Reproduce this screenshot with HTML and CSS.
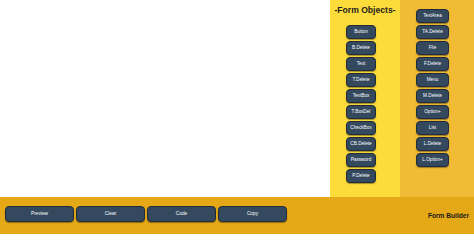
FILE: index.html
```html
<!DOCTYPE html>
<html>
<head>
<meta charset="utf-8">
<link rel="stylesheet" href="styles.css">
</head>
<body>
<div class="page">
  <div class="main">
    <div class="canvas"></div>
    <div class="col col-a">
      <div class="title">-Form Objects-</div>
      <div class="btn-list">
        <button class="obj">Button</button>
        <button class="obj">B.Delete</button>
        <button class="obj">Text</button>
        <button class="obj">T.Delete</button>
        <button class="obj">TextBox</button>
        <button class="obj">T.BoxDel</button>
        <button class="obj">CheckBox</button>
        <button class="obj">CB.Delete</button>
        <button class="obj">Password</button>
        <button class="obj">P.Delete</button>
      </div>
    </div>
    <div class="col col-b">
      <div class="btn-list">
        <button class="obj">TextArea</button>
        <button class="obj">TA.Delete</button>
        <button class="obj">File</button>
        <button class="obj">F.Delete</button>
        <button class="obj">Menu</button>
        <button class="obj">M.Delete</button>
        <button class="obj">Option+</button>
        <button class="obj">List</button>
        <button class="obj">L.Delete</button>
        <button class="obj">L.Option+</button>
      </div>
    </div>
  </div>
  <div class="bar">
    <div class="actions">
      <button class="act">Preview</button>
      <button class="act">Clear</button>
      <button class="act">Code</button>
      <button class="act">Copy</button>
    </div>
    <div class="brand">Form Builder</div>
  </div>
</div>
</body>
</html>
```

FILE: styles.css
```css
html, body {
  margin: 0;
  padding: 0;
  background: #ffffff;
  font-family: "Liberation Sans", Arial, sans-serif;
}

.page {
  width: 474px;
  height: 234px;
  display: flex;
  flex-direction: column;
  overflow: hidden;
}

.main {
  height: 197px;
  display: flex;
}

.canvas {
  flex: 1;
  background: #ffffff;
}

.col {
  display: flex;
  flex-direction: column;
  padding-left: 16px;
  box-sizing: border-box;
}

.col-a {
  width: 70px;
  background: #fcdb3b;
  padding-left: 0;
  align-items: stretch;
}

.col-a .btn-list {
  padding-left: 16px;
  margin-top: 8px;
}

.col-b {
  width: 74px;
  background: #f2bb36;
  padding-top: 9px;
}

.title {
  margin-top: 4px;
  height: 13px;
  line-height: 13px;
  font-size: 8.6px;
  font-weight: bold;
  color: #1d1d1d;
  text-align: center;
  white-space: nowrap;
}

.btn-list {
  display: flex;
  flex-direction: column;
  gap: 2px;
}

.obj, .act {
  box-sizing: border-box;
  margin: 0;
  padding: 0;
  background: #34495e;
  border: 1px solid #1f2c39;
  border-radius: 4px;
  box-shadow: 0 1px 1px rgba(0, 0, 0, 0.35);
  color: #ffffff;
  font-family: "Liberation Sans", Arial, sans-serif;
  text-align: center;
  white-space: nowrap;
}

.obj {
  height: 14px;
  font-size: 4.7px;
  line-height: 12px;
}

.col-a .obj {
  width: 30px;
}

.col-b .obj {
  width: 33px;
}

.bar {
  flex: 1;
  background: #e5a817;
  display: flex;
  align-items: flex-start;
  justify-content: space-between;
  padding: 9px 5px 0 5px;
}

.actions {
  display: flex;
  gap: 2px;
}

.act {
  width: 69px;
  height: 16px;
  font-size: 4.8px;
  line-height: 14px;
}

.brand {
  margin-top: 2px;
  line-height: 16px;
  font-size: 6.6px;
  font-weight: bold;
  color: #1a1a1a;
  white-space: nowrap;
}
```
